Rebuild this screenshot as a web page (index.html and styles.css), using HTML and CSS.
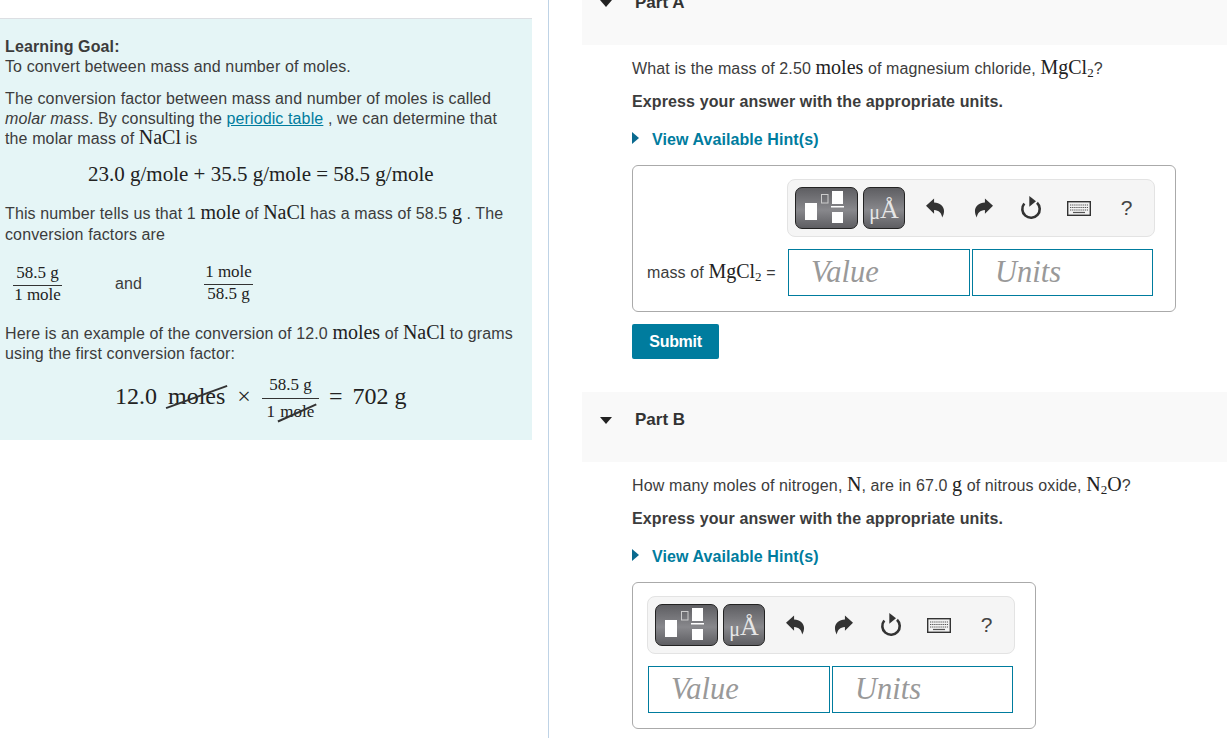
FILE: index.html
```html
<!DOCTYPE html>
<html lang="en">
<head>
<meta charset="utf-8">
<title>Mass and moles</title>
<link rel="stylesheet" href="styles.css">
</head>
<body>
<svg class="defs" width="0" height="0" aria-hidden="true">
  <defs>
    <symbol id="i-undo" viewBox="0 0 20 20"><path d="M0 7.500 8.500 0v4.200c6 .3 10.500 3.700 10.500 9 0 2.500-.8 4.800-2 6.800-.3-4.500-3.500-7.800-8.500-8V16z"/></symbol>
    <symbol id="i-redo" viewBox="0 0 20 20"><path d="M20 7.500 11.500 0v4.200C5.500 4.500 1 7.900 1 13.200c0 2.500.8 4.800 2 6.800.3-4.500 3.500-7.800 8.500-8V16z"/></symbol>
    <symbol id="i-reset" viewBox="-1 0 22 24"><path class="ring" d="M16 6.700A8.700 8.700 0 1 1 3.300 7.500"/><path d="M8.300 0 15 5.300 8.300 10.700z"/></symbol>
    <symbol id="i-keys" viewBox="0 0 24 15"><rect x=".7" y=".7" width="22.600" height="13.600" fill="#f2f2f2" stroke="#333" stroke-width="1.400"/><path class="keys" d="M3 4h18M3 6.500h18M3 9h18" stroke-dasharray="1.300 .8"/><path class="keys" d="M6 11.500h12"/></symbol>
  </defs>
</svg>
<main class="page">
  <section class="left">
    <div class="goal">
      <p class="intro"><b>Learning Goal:</b><br>To convert between mass and number of moles.</p>
      <p class="para">The conversion factor between mass and number of moles is called <i>molar mass</i>. By consulting the <a href="#">periodic table</a> , we can determine that the molar mass of <span class="m big">NaCl</span> is</p>
      <p class="eq1 m">23.0 g/mole + 35.5 g/mole = 58.5 g/mole</p>
      <p class="para p2">This number tells us that 1 <span class="m big">mole</span> of <span class="m big">NaCl</span> has a mass of 58.5 <span class="m big">g</span> . The conversion factors are</p>
      <div class="factors">
        <span class="frac m f1"><span class="num">58.5 g</span><span class="den">1 mole</span></span>
        <span class="and">and</span>
        <span class="frac m f2"><span class="num">1 mole</span><span class="den">58.5 g</span></span>
      </div>
      <p class="para p3">Here is an example of the conversion of 12.0 <span class="m big">moles</span> of <span class="m big">NaCl</span> to grams using the first conversion factor:</p>
      <div class="eq2 m">
        <span>12.0</span>
        <span class="cancel c1">moles</span>
        <span class="times">×</span>
        <span class="frac f3"><span class="num">58.5 g</span><span class="den">1 <span class="cancel c2">mole</span></span></span>
        <span class="equals">=</span>
        <span>702 g</span>
      </div>
    </div>
  </section>
  <section class="right">
    <header class="part-head"><span class="caret"></span><h2>Part A</h2></header>
    <div class="part-body">
      <p class="q">What is the mass of 2.50 <span class="m big">moles</span> of magnesium chloride, <span class="m big">MgCl<sub>2</sub></span>?</p>
      <p class="express">Express your answer with the appropriate units.</p>
      <p class="hint"><span class="tri"></span>View Available Hint(s)</p>
      <div class="answer">
        <span class="slot"></span>
        <div class="toolbar shifted">
          <span class="tool-btn wide"><svg width="61" height="40" viewBox="0 0 61 40"><rect x="9" y="15" width="12" height="17" fill="#fff"/><rect x="25.500" y="6.500" width="6.500" height="8.500" fill="none" stroke="#ccc"/><rect x="36" y="3" width="11" height="13" fill="#fff"/><rect x="35" y="18" width="13" height="1.500" fill="#fff"/><rect x="36" y="24" width="11" height="11" fill="#fff"/></svg></span>
          <span class="tool-btn unit"><span class="mu">μ</span>Å</span>
          <span class="tool"><svg class="ic" width="19" height="20"><use href="#i-undo"/></svg></span>
          <span class="tool"><svg class="ic" width="19" height="20"><use href="#i-redo"/></svg></span>
          <span class="tool"><svg class="ic" width="22" height="24"><use href="#i-reset"/></svg></span>
          <span class="tool"><svg width="24" height="15"><use href="#i-keys"/></svg></span>
          <span class="tool qm">?</span>
        </div>
        <span class="label">mass of <span class="m big">MgCl<sub>2</sub></span> =</span>
        <div class="fields"><span class="field">Value</span><span class="field">Units</span></div>
      </div>
      <button class="submit" type="button">Submit</button>
    </div>
    <header class="part-head b"><span class="caret"></span><h2>Part B</h2></header>
    <div class="part-body">
      <p class="q">How many moles of nitrogen, <span class="m big">N</span>, are in 67.0 <span class="m big">g</span> of nitrous oxide, <span class="m big">N<sub>2</sub>O</span>?</p>
      <p class="express">Express your answer with the appropriate units.</p>
      <p class="hint"><span class="tri"></span>View Available Hint(s)</p>
      <div class="answer small">
        <div class="toolbar">
          <span class="tool-btn wide"><svg width="61" height="40" viewBox="0 0 61 40"><rect x="9" y="15" width="12" height="17" fill="#fff"/><rect x="25.500" y="6.500" width="6.500" height="8.500" fill="none" stroke="#ccc"/><rect x="36" y="3" width="11" height="13" fill="#fff"/><rect x="35" y="18" width="13" height="1.500" fill="#fff"/><rect x="36" y="24" width="11" height="11" fill="#fff"/></svg></span>
          <span class="tool-btn unit"><span class="mu">μ</span>Å</span>
          <span class="tool"><svg class="ic" width="19" height="20"><use href="#i-undo"/></svg></span>
          <span class="tool"><svg class="ic" width="19" height="20"><use href="#i-redo"/></svg></span>
          <span class="tool"><svg class="ic" width="22" height="24"><use href="#i-reset"/></svg></span>
          <span class="tool"><svg width="24" height="15"><use href="#i-keys"/></svg></span>
          <span class="tool qm">?</span>
        </div>
        <div class="fields"><span class="field">Value</span><span class="field">Units</span></div>
      </div>
    </div>
  </section>
</main>
</body>
</html>
```
FILE: styles.css
```css
* { box-sizing: border-box; }
html, body { margin: 0; height: 738px; overflow: hidden; background: #fff; }
body { font: 16px/20px "Liberation Sans", Arial, sans-serif; color: #3c3c3c; letter-spacing: .12px; }
.defs { position: absolute; }
.page { display: flex; height: 738px; overflow: hidden; }
p { margin: 0; }
.m { font-family: "Liberation Serif", "Times New Roman", serif; color: #222; letter-spacing: 0; }
.big { font-size: 20px; line-height: 0; }
sub { font-size: 13px; line-height: 0; vertical-align: -3px; }

.left { width: 549px; flex: none; border-right: 1px solid #bfd3e6; padding-top: 18px; }
.goal { width: 532px; height: 422px; background: #e5f5f6; border-top: 1px solid #dcdfe3; padding: 18px 0 0 5px; }
.goal a { color: #007c9e; text-decoration: underline; }
.intro { margin-bottom: 12px; }
.para { width: 510px; }
.eq1 { margin: 13px 0 0 83px; font-size: 21px; line-height: 24px; }
.p2 { margin-top: 17px; line-height: 21px; }
.factors { display: flex; align-items: center; margin-top: 17px; height: 44px; }
.frac { display: inline-flex; flex-direction: column; align-items: center; font-size: 17px; line-height: 18px; white-space: nowrap; }
.num { padding-bottom: 3px; border-bottom: 1px solid #333; width: 100%; text-align: center; }
.f1 { margin-left: 8px; width: 49px; }
.and { margin-left: 53px; width: 78px; }
.f2 { width: 49px; margin-left: 11px; margin-top: -3px; }
.p3 { margin-top: 18px; }
.eq2 { display: flex; align-items: center; margin: 5px 0 0 110px; font-size: 24px; height: 54px; white-space: pre; }
.c1 { margin-left: 11px; }
.times { margin: 0 0 0 12px; font-size: 24px; }
.f3 { width: 57px; margin: 5px 10px 0 11px; }
.f3 .num { padding-bottom: 4px; }
.f3 .den { padding-top: 4px; }
.equals { margin-right: 10px; }
.cancel { position: relative; display: inline-block; }
.cancel::after { content: ""; position: absolute; left: -4px; right: -4px; top: 50%; height: 1.500px; background: #333; transform: rotate(-20deg); }
.c2 { margin-left: 1px; }
.c2::after { transform: rotate(-24deg); }

.right { flex: none; width: 645px; margin-left: 33px; margin-top: -25px; }
.part-head { display: flex; align-items: flex-start; height: 70px; background: #f9f9f9; padding: 18px 0 0 18px; }
.part-head.b { margin-top: 33px; }
.part-head h2 { margin: 0 0 0 23px; font-size: 17px; line-height: 20px; font-weight: 700; letter-spacing: 0; color: #333; }
.caret { width: 0; height: 0; margin-top: 7px; border-left: 6.500px solid transparent; border-right: 6.500px solid transparent; border-top: 7px solid #222; }
.part-body { padding-left: 50px; }
.q { margin-top: 14px; line-height: 20px; }
.express { margin-top: 13px; font-weight: 700; }
.hint { display: flex; align-items: center; margin-top: 18px; color: #007c9e; font-weight: 700; letter-spacing: .08px; }
.tri { width: 0; height: 0; margin: -4px 13px 0 0; border-top: 6.500px solid transparent; border-bottom: 6.500px solid transparent; border-left: 7px solid #0a6a8f; }
.answer { display: grid; grid-template-columns: 141px 1fr; align-items: center; width: 544px; height: 147px; margin-top: 15px; padding: 13px 20px 15px 14px; border: 1px solid #aaa; border-radius: 6px; }
.answer.small { display: block; width: 404px; }
.toolbar { display: flex; align-items: center; width: 368px; height: 58px; padding-left: 7px; background: #f5f5f5; border: 1px solid #e3e3e3; border-radius: 8px; }
.toolbar.shifted { margin-left: -1px; }
.tool-btn { display: flex; align-items: center; justify-content: center; height: 42px; border: 1px solid #222; border-radius: 7px; background: linear-gradient(#5e5e62, #88888c 55%, #5e5e62); }
.tool-btn.wide { width: 63px; }
.tool-btn.unit { width: 42px; margin-left: 5px; font: 26px/1 "Liberation Serif", serif; color: #e6e6e6; padding-top: 4px; letter-spacing: 0; }
.mu { font-size: 20px; padding-top: 3px; }
.tool { display: flex; align-items: center; justify-content: center; width: 47.700px; height: 40px; }
.tool:nth-child(3) { margin-left: 7px; }
.ic { fill: #333; }
.ring { fill: none; stroke: #333; stroke-width: 2.600; }
.keys { fill: none; stroke: #555; stroke-width: 1.200; }
.qm { font-size: 21px; color: #444; }
.label { white-space: nowrap; margin-top: 12px; }
.fields { display: grid; grid-template-columns: 182px 181px; gap: 2px; width: 365px; margin-top: 12px; }
.field { display: block; height: 47px; padding-left: 22px; border: 1px solid #007c9e; background: #fff; font: italic 30.500px/45px "Liberation Serif", serif; color: #999; letter-spacing: 0; }
.answer.small .fields { margin-left: 1px; }
.submit { display: block; margin-top: 12px; width: 87px; height: 35px; padding: 0; border: 0; border-radius: 2px; background: #007c9e; color: #fff; font: 700 16px "Liberation Sans", Arial, sans-serif; letter-spacing: -.3px; }
```
